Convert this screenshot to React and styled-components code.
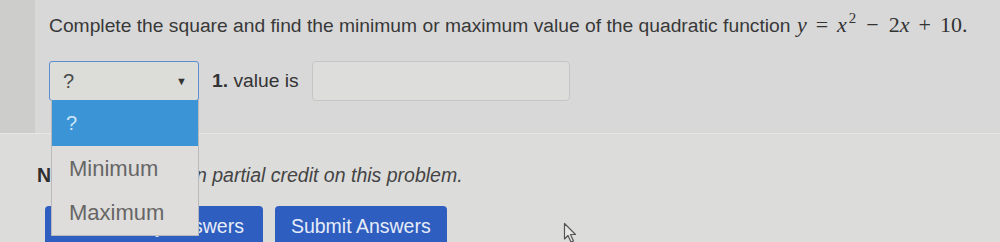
import React from "react";
import styled, { createGlobalStyle } from "styled-components";

const Global = createGlobalStyle`
  html, body { margin: 0; padding: 0; }
  body {
    width: 1000px; height: 242px; overflow: hidden;
    background: #dcdcdb;
    font-family: "Liberation Sans", Arial, sans-serif;
    color: #333;
  }
`;

const Page = styled.div`
  position: relative;
  width: 1000px;
  height: 242px;
  overflow: hidden;
`;

const Panel = styled.div`
  display: flex;
  height: 133px;
  border-bottom: 1px solid #e6e6e4;
`;

const Gutter = styled.div`
  width: 35px;
  background: #cdcdcc;
`;

const ProblemBody = styled.div`
  flex: 1;
  background: #d8d8d9;
  padding: 13px 0 0 14px;
`;

const Question = styled.div`
  font-size: 19.25px;
  line-height: 24px;
  color: #383838;
  white-space: nowrap;
`;

const Math = styled.span`
  font-family: "Liberation Serif", "DejaVu Serif", serif;
  font-size: 22px;
  color: #333;
  margin-left: 1px;
`;

const MVar = styled.i`
  font-style: italic;
`;

const MOp = styled.span`
  margin: 0 ${p => p.$space || 7}px;
`;

const Sup = styled.sup`
  font-size: 15px;
  vertical-align: 9px;
  line-height: 0;
  margin-left: 2px;
`;

const AnswerRow = styled.div`
  display: flex;
  align-items: center;
  gap: 13px;
  margin-top: 23px;
  height: 40px;
`;

const SelectWrap = styled.div`
  position: relative;
  width: 150px;
  height: 40px;
`;

const SelectBox = styled.div`
  box-sizing: border-box;
  width: 100%;
  height: 100%;
  border: 1.5px solid #5a8fd2;
  border-radius: 3px;
  background: #dcdcd9;
  display: flex;
  align-items: center;
  justify-content: space-between;
  padding: 0 11px 0 13px;
  font-size: 20px;
  color: #4a4a4a;
`;

const Caret = styled.span`
  font-size: 11px;
  color: #333;
`;

const Menu = styled.div`
  position: absolute;
  top: 39px;
  left: 2px;
  width: 148px;
  box-sizing: border-box;
  background: #dedddb;
  border: 1px solid #b9b9bb;
  border-top: none;
  z-index: 5;
`;

const Option = styled.div`
  height: ${p => p.$h || 45}px;
  display: flex;
  align-items: center;
  padding-left: ${p => p.$active ? 14 : 17}px;
  font-size: ${p => p.$active ? 20 : 22}px;
  background: ${p => p.$active ? "#3a94d6" : "transparent"};
  color: ${p => p.$active ? "#cfe5f6" : "#666"};
`;

const Label = styled.span`
  font-size: 19.25px;
  color: #333;
`;

const Num = styled.b`
  font-weight: bold;
`;

const AnswerInput = styled.div`
  width: 258px;
  height: 40px;
  box-sizing: border-box;
  border: 1px solid #c6c6c6;
  border-radius: 4px;
  background: #dddddb;
`;

const Note = styled.div`
  margin: 29px 0 0 37px;
  font-size: 19.5px;
  line-height: 24px;
  color: #2e2e2e;
  white-space: nowrap;
`;

const NoteItalic = styled.i`
  font-style: italic;
  color: #444;
`;

const Buttons = styled.div`
  display: flex;
  gap: 12px;
  margin: 19px 0 0 45px;
`;

const Button = styled.button`
  height: 42px;
  padding: 9px ${p => p.$pad || 18}px 0;
  border: none;
  border-radius: 4px;
  background: #2e5ec0;
  color: #e6ecf8;
  font-family: "Liberation Sans", Arial, sans-serif;
  font-size: 19.5px;
  display: flex;
  align-items: flex-start;
  box-sizing: border-box;
`;

const Cursor = styled.svg`
  position: absolute;
  left: 563px;
  top: 222px;
`;

export default function App() {
  return (
    <Page>
      <Global />
      <Panel>
        <Gutter />
        <ProblemBody>
          <Question>
            Complete the square and find the minimum or maximum value of the quadratic function{" "}
            <Math>
              <MVar>y</MVar>
              <MOp $space={9}>=</MOp>
              <MVar>x</MVar>
              <Sup>2</Sup>
              <MOp $space={10}>−</MOp>
              2<MVar>x</MVar>
              <MOp $space={9}>+</MOp>
              10.
            </Math>
          </Question>
          <AnswerRow>
            <SelectWrap>
              <SelectBox>
                <span>?</span>
                <Caret>▼</Caret>
              </SelectBox>
              <Menu>
                <Option $active $h={46}>?</Option>
                <Option>Minimum</Option>
                <Option $h={44}>Maximum</Option>
              </Menu>
            </SelectWrap>
            <Label>
              <Num>1.</Num> value is
            </Label>
            <AnswerInput />
          </AnswerRow>
        </ProblemBody>
      </Panel>
      <Note>
        <b>Note:</b>
        <NoteItalic> You can earn partial credit on this problem.</NoteItalic>
      </Note>
      <Buttons>
        <Button $pad={19}>Preview My Answers</Button>
        <Button $pad={16}>Submit Answers</Button>
      </Buttons>
      <Cursor width="16" height="22" viewBox="0 0 16 22">
        <path
          d="M1.5 1.5 L1.5 17 L5 13.5 L8 20 L10.5 19 L7.5 12.5 L12.5 12.5 Z"
          fill="#e8e8e8"
          stroke="#555"
          strokeWidth="1.2"
          strokeLinejoin="round"
        />
      </Cursor>
    </Page>
  );
}
